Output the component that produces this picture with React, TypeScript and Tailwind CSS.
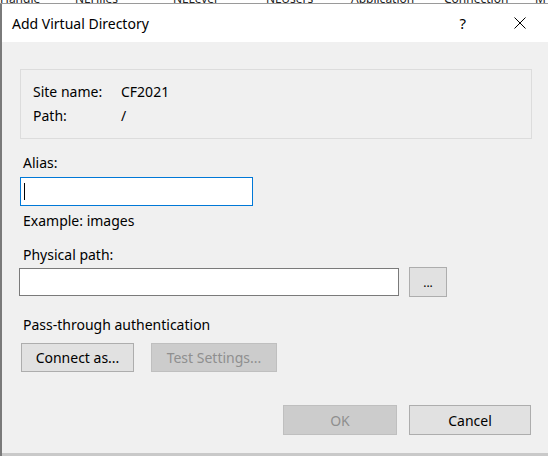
import React from "react";

const font = { fontFamily: '"Noto Sans", "Open Sans", "Liberation Sans", sans-serif' };

function Btn({ children, w, disabled, cls = "" }: { children: React.ReactNode; w: string; disabled?: boolean; cls?: string }) {
  return (
    <div
      className={`${w} ${cls} flex items-center justify-center border text-[14px] ${
        disabled ? "bg-[#cccccc] border-[#bfbfbf] text-[#8f8f8f]" : "bg-[#e1e1e1] border-[#adadad] text-black"
      }`}
    >
      {children}
    </div>
  );
}

export default function App() {
  return (
    <div className="w-[548px] h-[456px] overflow-hidden bg-[#f0f0f0] flex flex-col" style={font}>
      {/* background window strip */}
      <div className="h-[4px] bg-white border-b border-[#9a9a9a] overflow-hidden flex text-[12px] text-[#222] leading-[14px]">
        <div className="-mt-[8px] flex whitespace-nowrap">
          <span className="w-[52px]">Handle</span>
          <span className="ml-[23px] w-[65px]">NLHiles</span>
          <span className="ml-[33px] w-[59px]">NLLevel</span>
          <span className="ml-[34px] w-[61px]">NLUsers</span>
          <span className="ml-[24px] w-[74px]">Application</span>
          <span className="ml-[19px] w-[77px]">Connection</span>
          <span className="ml-[14px]">M</span>
        </div>
      </div>
      <div className="flex-1 flex border-l-2 border-[#7a7a7a] flex-col">
        {/* title bar */}
        <div className="h-[38px] bg-white flex items-center pl-[10px] shrink-0">
          <span className="text-[14px] text-black">Add Virtual Directory</span>
          <span className="ml-auto text-[15px] text-black">?</span>
          <svg className="ml-[48px] mr-[22px]" width="12" height="12" viewBox="0 0 12 12">
            <path d="M0.5 0.5 L11.5 11.5 M11.5 0.5 L0.5 11.5" stroke="#000" strokeWidth="1" fill="none" />
          </svg>
        </div>
        {/* body */}
        <div className="flex-1 flex flex-col text-[14px] text-black">
          <div className="pl-[18px] flex flex-col">
            <div className="mt-[27px] h-[70px] w-[512px] border border-[#dcdcdc] pt-[10px] pl-[12px] leading-[24px]">
              <div className="flex">
                <span className="w-[88px]">Site name:</span>
                <span>CF2021</span>
              </div>
              <div className="flex">
                <span className="w-[88px]">Path:</span>
                <span>/</span>
              </div>
            </div>
            <div className="mt-[14px] ml-[3px] leading-[20px]">Alias:</div>
            <div className="mt-[4px] h-[29px] w-[233px] bg-white border border-[#0078d7] flex items-center pl-[3px]">
              <span className="w-px h-[17px] bg-black" />
            </div>
            <div className="mt-[5px] ml-[3px] leading-[20px]">Example: images</div>
            <div className="mt-[14px] ml-[3px] leading-[20px]">Physical path:</div>
            <div className="mt-[2px] flex items-start h-[30px]">
              <div className="-ml-px mt-px h-[28px] w-[380px] bg-white border border-[#7a7a7a]" />
              <Btn w="w-[38px] h-[30px] ml-[10px]">
                <span className="text-[12px] leading-none pt-[2px]">...</span>
              </Btn>
            </div>
            <div className="mt-[18px] ml-[3px] leading-[20px]">Pass-through authentication</div>
            <div className="mt-[8px] flex">
              <Btn w="w-[113px] h-[29px] ml-px">Connect as...</Btn>
              <Btn w="w-[126px] h-[29px] ml-[17px]" disabled>
                Test Settings...
              </Btn>
            </div>
          </div>
          <div className="mt-[33px] flex justify-end pr-[17px]">
            <Btn w="w-[114px] h-[30px]" disabled>
              OK
            </Btn>
            <Btn w="w-[122px] h-[30px] ml-[12px]">Cancel</Btn>
          </div>
          <div className="flex-1" />
          <div className="h-[3px] bg-[#c9c9c9]" />
        </div>
      </div>
    </div>
  );
}
